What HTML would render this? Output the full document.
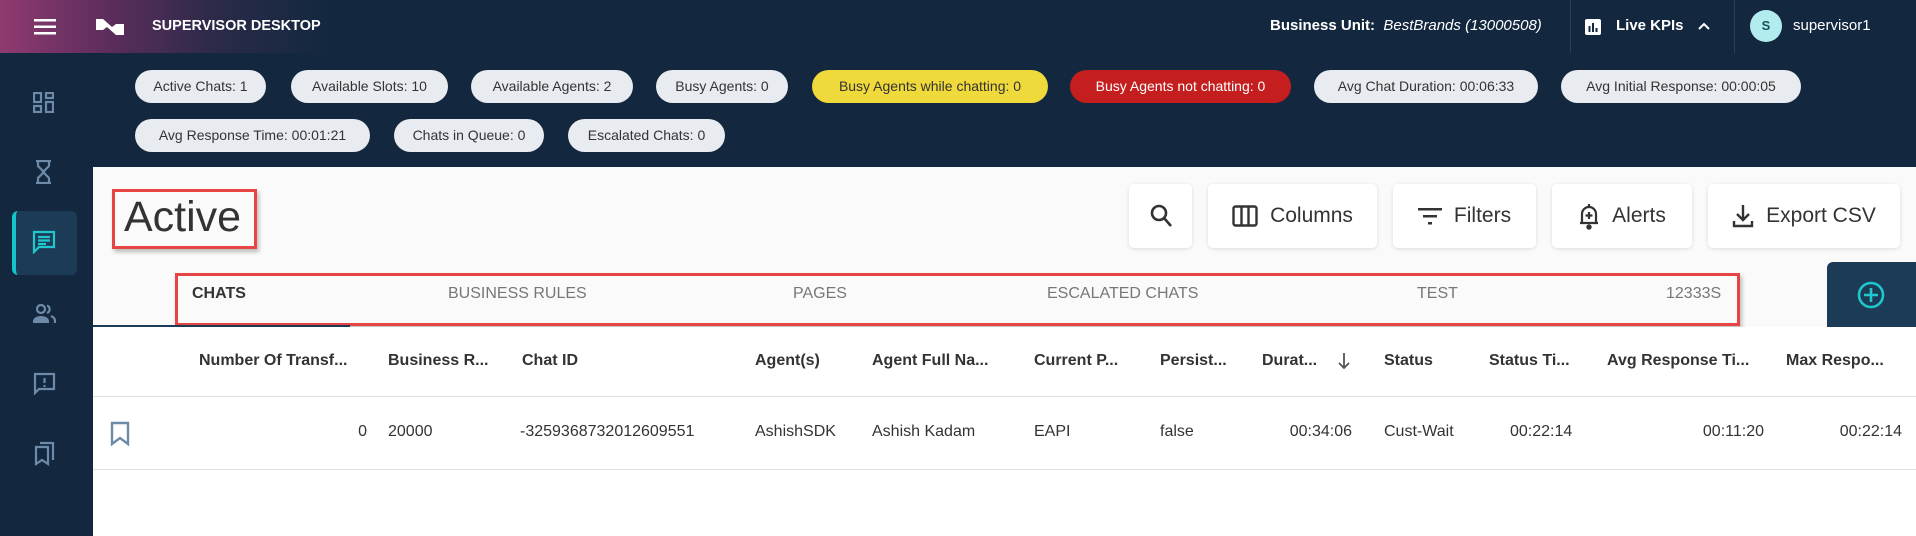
<!DOCTYPE html>
<html><head><meta charset="utf-8"><style>
*{margin:0;padding:0;box-sizing:border-box}
body{width:1916px;height:536px;overflow:hidden;background:#fafafa;font-family:"Liberation Sans",sans-serif;position:relative}
.a{position:absolute}
.hdr{left:0;top:0;width:1916px;height:53px;background:linear-gradient(90deg,#8f3a70 0px,#5b2d5c 110px,#2a2a48 220px,#13283f 330px,#13283f 100%)}
.dark{left:0;top:53px;width:1916px;height:114px;background:#13283f}
.side{left:0;top:53px;width:93px;height:483px;background:#13283f}
.chip{position:absolute;height:33px;border-radius:17px;background:#e8ebef;color:#333;font-size:14px;line-height:33px;text-align:center;white-space:nowrap}
.btn{position:absolute;top:184px;height:64px;background:#fff;border-radius:5px;box-shadow:0 1px 4px rgba(0,0,0,.12);font-size:21px;color:#333;display:flex;align-items:center;justify-content:center;gap:12px}
.tab{position:absolute;top:285px;font-size:16px;color:#777;white-space:nowrap}
.th{position:absolute;top:352px;font-size:16px;font-weight:bold;color:#333;white-space:nowrap}
.td{position:absolute;top:423px;font-size:16px;color:#333;white-space:nowrap}
.r{text-align:right}
</style></head><body>
<div class="a hdr"></div>
<div class="a dark"></div>
<div class="a side"></div>
<!-- menu -->
<svg class="a" style="left:34px;top:19px" width="22" height="16"><rect y="0" width="22" height="2.5" fill="#fff"/><rect y="6.5" width="22" height="2.5" fill="#fff"/><rect y="13" width="22" height="2.5" fill="#fff"/></svg>
<!-- logo -->
<svg class="a" style="left:96px;top:17px" width="36" height="20"><path d="M0 2h7l9 8l4-3h8v11h-8l-9-8l-4 3H0z" fill="#fff"/></svg>
<div class="a" style="left:152px;top:18px;color:#fff;font-weight:bold;font-size:14.5px">SUPERVISOR DESKTOP</div>
<div class="a" style="left:1270px;top:17px;color:#fff;font-size:15px;white-space:nowrap"><b>Business Unit:</b>&nbsp; <i>BestBrands (13000508)</i></div>
<div class="a" style="left:1570px;top:0;width:1px;height:53px;background:#2a3f58"></div>
<div class="a" style="left:1734px;top:0;width:1px;height:53px;background:#2a3f58"></div>
<svg class="a" style="left:1585px;top:19px" width="16" height="16"><rect width="16" height="16" rx="2" fill="#fff"/><rect x="3.5" y="7" width="2" height="6" fill="#13283f"/><rect x="7" y="4" width="2" height="9" fill="#13283f"/><rect x="10.5" y="9" width="2" height="4" fill="#13283f"/></svg>
<div class="a" style="left:1616px;top:17px;color:#fff;font-weight:bold;font-size:15px">Live KPIs</div>
<svg class="a" style="left:1697px;top:21px" width="14" height="10"><path d="M2 8l5-5l5 5" stroke="#fff" stroke-width="2" fill="none"/></svg>
<div class="a" style="left:1750px;top:10px;width:32px;height:32px;border-radius:50%;background:#b3ecef;color:#1a5060;font-size:13px;font-weight:bold;text-align:center;line-height:32px">S</div>
<div class="a" style="left:1793px;top:17px;color:#fff;font-size:15px">supervisor1</div>
<!-- chips -->
<div class="chip" style="left:135px;top:70px;width:131px">Active Chats: 1</div>
<div class="chip" style="left:291px;top:70px;width:157px">Available Slots: 10</div>
<div class="chip" style="left:471px;top:70px;width:162px">Available Agents: 2</div>
<div class="chip" style="left:656px;top:70px;width:132px">Busy Agents: 0</div>
<div class="chip" style="left:812px;top:70px;width:236px;background:#f0d93a">Busy Agents while chatting: 0</div>
<div class="chip" style="left:1070px;top:70px;width:221px;background:#c41e1e;color:#fff">Busy Agents not chatting: 0</div>
<div class="chip" style="left:1314px;top:70px;width:224px">Avg Chat Duration: 00:06:33</div>
<div class="chip" style="left:1561px;top:70px;width:240px">Avg Initial Response: 00:00:05</div>
<div class="chip" style="left:135px;top:119px;width:235px">Avg Response Time: 00:01:21</div>
<div class="chip" style="left:394px;top:119px;width:150px">Chats in Queue: 0</div>
<div class="chip" style="left:568px;top:119px;width:157px">Escalated Chats: 0</div>
<!-- sidebar icons -->
<svg class="a" style="left:33px;top:92px" width="21" height="21" fill="none" stroke="#6d8aa8" stroke-width="2.2"><rect x="1" y="1" width="7" height="9"/><rect x="13" y="1" width="7" height="5"/><rect x="1" y="14" width="7" height="6"/><rect x="13" y="10" width="7" height="10"/></svg>
<svg class="a" style="left:35px;top:160px" width="17" height="24" fill="none" stroke="#6d8aa8" stroke-width="2.2"><path d="M1 1h15M1 23h15M3 1v5l6 6l-6 6v5M14 1v5l-6 6l6 6v5"/></svg>
<div class="a" style="left:12px;top:211px;width:65px;height:64px;background:#1c3b57;border-radius:6px;border-left:4px solid #14c4c8"></div>
<svg class="a" style="left:32px;top:230px" width="24" height="24" fill="none" stroke="#1ec8cc" stroke-width="2.2"><path d="M2 2h20v15H7l-5 5z"/><path d="M6 7h12M6 10.5h12M6 14h8"/></svg>
<svg class="a" style="left:32px;top:304px" width="24" height="20" fill="#6d8aa8"><circle cx="9" cy="5" r="4" fill="none" stroke="#6d8aa8" stroke-width="2.2"/><path d="M1 19v-2c0-3 4-5 8-5s8 2 8 5v2z"/><path d="M15 1.5a4 4 0 0 1 0 7.5M19 12c2 1 4 2 4 5v2" fill="none" stroke="#6d8aa8" stroke-width="2.2"/></svg>
<svg class="a" style="left:33px;top:372px" width="23" height="23" fill="none" stroke="#6d8aa8" stroke-width="2.2"><path d="M2 2h19v15H6l-4 4z"/><path d="M11.5 6v5M11.5 13v2"/></svg>
<svg class="a" style="left:34px;top:440px" width="21" height="26" fill="none" stroke="#6d8aa8" stroke-width="2.2"><path d="M2 7h12v17l-6-4l-6 4z"/><path d="M6 3h13v17"/></svg>
<!-- title -->
<div class="a" style="left:112px;top:189px;width:145px;height:60px;border:3px solid #e84444;box-shadow:2px 3px 4px rgba(0,0,0,.25)"></div>
<div class="a" style="left:124px;top:193px;font-size:43px;color:#333">Active</div>
<!-- buttons -->
<div class="btn" style="left:1129px;width:63px"><svg width="24" height="26" fill="none" stroke="#333" stroke-width="2.6"><circle cx="10" cy="10" r="7"/><path d="M15 15l7 8"/></svg></div>
<div class="btn" style="left:1208px;width:169px"><svg width="26" height="22" fill="none" stroke="#333" stroke-width="2.4"><rect x="1.5" y="1.5" width="23" height="19" rx="2"/><path d="M9.5 1.5v19M16.5 1.5v19"/></svg>Columns</div>
<div class="btn" style="left:1393px;width:143px"><svg width="24" height="18" fill="#333"><rect x="0" y="1" width="24" height="2.5"/><rect x="5" y="8" width="14" height="2.5"/><rect x="10" y="15" width="4" height="2.5"/></svg>Filters</div>
<div class="btn" style="left:1552px;width:140px"><svg width="22" height="30" fill="none" stroke="#333" stroke-width="2.2"><path d="M4 22V13a7 7 0 0 1 14 0v9h2H2z"/><path d="M11 3v3M11 11v7M7.5 14.5h7"/><circle cx="11" cy="26" r="1.6" fill="#333"/></svg>Alerts</div>
<div class="btn" style="left:1708px;width:192px"><svg width="22" height="24" fill="none" stroke="#333" stroke-width="2.4"><path d="M11 1v15M5 10l6 6l6-6M2 17v5h18v-5"/></svg>Export CSV</div>
<!-- tabs -->
<div class="a" style="left:175px;top:273px;width:1565px;height:53px;border:3px solid #e84444;box-shadow:2px 3px 4px rgba(0,0,0,.25)"></div>
<div class="tab" style="left:192px;color:#333;font-weight:bold">CHATS</div>
<div class="tab" style="left:448px">BUSINESS RULES</div>
<div class="tab" style="left:793px">PAGES</div>
<div class="tab" style="left:1047px">ESCALATED CHATS</div>
<div class="tab" style="left:1417px">TEST</div>
<div class="tab" style="left:1666px">12333S</div>
<div class="a" style="left:93px;top:325px;width:257px;height:3px;background:#1c3b57"></div>
<div class="a" style="left:1827px;top:262px;width:89px;height:65px;background:#1c3b57;border-radius:6px 0 0 0"></div>
<svg class="a" style="left:1857px;top:281px" width="28" height="28" fill="none" stroke="#1ec8cc" stroke-width="2.6"><circle cx="14" cy="14" r="12"/><path d="M14 7v14M7 14h14"/></svg>
<!-- table -->
<div class="a" style="left:93px;top:327px;width:1823px;height:209px;background:#fff"></div>
<div class="th" style="left:199px">Number Of Transf...</div>
<div class="th" style="left:388px">Business R...</div>
<div class="th" style="left:522px">Chat ID</div>
<div class="th" style="left:755px">Agent(s)</div>
<div class="th" style="left:872px">Agent Full Na...</div>
<div class="th" style="left:1034px">Current P...</div>
<div class="th" style="left:1160px">Persist...</div>
<div class="th" style="left:1262px">Durat...</div>
<svg class="a" style="left:1336px;top:351px" width="16" height="20" fill="none" stroke="#555" stroke-width="1.8"><path d="M8 2v15M3 12l5 5l5-5"/></svg>
<div class="th" style="left:1384px">Status</div>
<div class="th" style="left:1489px">Status Ti...</div>
<div class="th" style="left:1607px">Avg Response Ti...</div>
<div class="th" style="left:1786px">Max Respo...</div>
<div class="a" style="left:93px;top:396px;width:1823px;height:1px;background:#e0e0e0"></div>
<svg class="a" style="left:110px;top:421px" width="20" height="26" fill="none" stroke="#6d8aa8" stroke-width="2.4"><path d="M2 2h16v21l-8-6l-8 6z"/></svg>
<div class="td r" style="left:300px;width:67px">0</div>
<div class="td" style="left:388px">20000</div>
<div class="td" style="left:520px">-3259368732012609551</div>
<div class="td" style="left:755px">AshishSDK</div>
<div class="td" style="left:872px">Ashish Kadam</div>
<div class="td" style="left:1034px">EAPI</div>
<div class="td" style="left:1160px">false</div>
<div class="td r" style="left:1250px;width:102px">00:34:06</div>
<div class="td" style="left:1384px">Cust-Wait</div>
<div class="td" style="left:1510px">00:22:14</div>
<div class="td r" style="left:1660px;width:104px">00:11:20</div>
<div class="td r" style="left:1800px;width:102px">00:22:14</div>
<div class="a" style="left:93px;top:469px;width:1823px;height:1px;background:#e0e0e0"></div>
</body></html>
